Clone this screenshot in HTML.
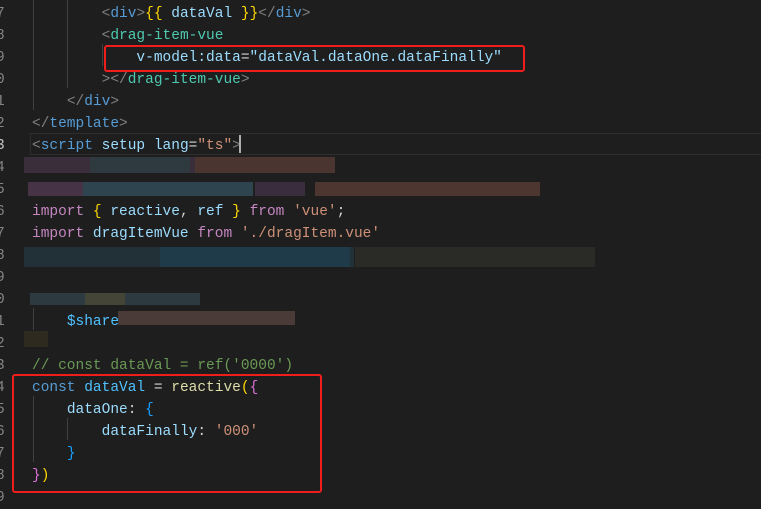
<!DOCTYPE html>
<html><head><meta charset="utf-8"><style>
html,body{margin:0;padding:0;width:761px;height:502px;overflow:hidden;background:#1e1e1e;}
.l{position:absolute;left:32px;height:22px;line-height:22px;font-family:"Liberation Mono",monospace;font-size:14.5px;white-space:pre;color:#d4d4d4;margin-top:2px}
.n{position:absolute;left:-4px;height:22px;line-height:22px;font-family:"Liberation Mono",monospace;font-size:14.5px;color:#858585;margin-top:2px}
.g{color:#808080}.t{color:#569cd6}.c{color:#4ec9b0}.a{color:#9cdcfe}.s{color:#ce9178}.k{color:#c586c0}
.f{color:#dcdcaa}.cm{color:#6a9955}.y{color:#ffd700}.p{color:#da70d6}.b{color:#179fff}.v{color:#4fc1ff}
.guide{position:absolute;width:1px;background:#404040}
.blk{position:absolute}
.red{position:absolute;border:2px solid #f01d1d;border-radius:3px}
</style></head><body>
<div style="position:absolute;left:30px;top:133px;width:731px;height:20px;border:1px solid #2e2e2e"></div>
<div class="guide" style="left:33px;top:0;height:110px"></div>
<div class="guide" style="left:67px;top:0;height:88px"></div>
<div class="guide" style="left:102px;top:44px;height:22px"></div>
<div class="guide" style="left:33px;top:308px;height:22px"></div>
<div class="guide" style="left:33px;top:396px;height:66px"></div>
<div class="guide" style="left:67px;top:418px;height:22px"></div>

<div class="n" style="top:1px">7</div><div class="n" style="top:23px">8</div><div class="n" style="top:45px">9</div><div class="n" style="top:67px">0</div><div class="n" style="top:89px">1</div><div class="n" style="top:111px">2</div><div class="n" style="top:133px;color:#c6c6c6">3</div><div class="n" style="top:155px">4</div><div class="n" style="top:177px">5</div><div class="n" style="top:199px">6</div><div class="n" style="top:221px">7</div><div class="n" style="top:243px">8</div><div class="n" style="top:265px">9</div><div class="n" style="top:287px">0</div><div class="n" style="top:309px">1</div><div class="n" style="top:331px">2</div><div class="n" style="top:353px">3</div><div class="n" style="top:375px">4</div><div class="n" style="top:397px">5</div><div class="n" style="top:419px">6</div><div class="n" style="top:441px">7</div><div class="n" style="top:463px">8</div><div class="n" style="top:485px">9</div>

<div class="l" style="top:1px">        <span class="g">&lt;</span><span class="t">div</span><span class="g">&gt;</span><span class="y">{{</span> <span class="a">dataVal</span> <span class="y">}}</span><span class="g">&lt;/</span><span class="t">div</span><span class="g">&gt;</span></div>
<div class="l" style="top:23px">        <span class="g">&lt;</span><span class="c">drag-item-vue</span></div>
<div class="l" style="top:45px">            <span class="a">v-model:data</span>=<span class="a">"dataVal.dataOne.dataFinally"</span></div>
<div class="l" style="top:67px">        <span class="g">&gt;&lt;/</span><span class="c">drag-item-vue</span><span class="g">&gt;</span></div>
<div class="l" style="top:89px">    <span class="g">&lt;/</span><span class="t">div</span><span class="g">&gt;</span></div>
<div class="l" style="top:111px"><span class="g">&lt;/</span><span class="t">template</span><span class="g">&gt;</span></div>
<div class="l" style="top:133px"><span class="g">&lt;</span><span class="t">script</span> <span class="a">setup</span> <span class="a">lang</span>=<span class="s">"ts"</span><span class="g">&gt;</span></div>
<div style="position:absolute;left:239px;top:135px;width:2px;height:18px;background:#aeafad"></div>

<div class="blk" style="left:24px;top:157px;width:190px;height:16px;background:#3a2e3a"></div>
<div class="blk" style="left:90px;top:157px;width:100px;height:16px;background:#2f3a40"></div>
<div class="blk" style="left:195px;top:157px;width:140px;height:16px;background:#4a3530"></div>
<div class="blk" style="left:28px;top:182px;width:225px;height:14px;background:#2e4550"></div>
<div class="blk" style="left:28px;top:182px;width:55px;height:14px;background:#463446"></div>
<div class="blk" style="left:255px;top:182px;width:50px;height:14px;background:#3a2e3e"></div>
<div class="blk" style="left:315px;top:182px;width:225px;height:14px;background:#4d3530"></div>

<div class="l" style="top:199px"><span class="k">import</span> <span class="y">{</span> <span class="a">reactive</span>, <span class="a">ref</span> <span class="y">}</span> <span class="k">from</span> <span class="s">'vue'</span>;</div>
<div class="l" style="top:221px"><span class="k">import</span> <span class="a">dragItemVue</span> <span class="k">from</span> <span class="s">'./dragItem.vue'</span></div>

<div class="blk" style="left:24px;top:247px;width:330px;height:20px;background:#223038"></div>
<div class="blk" style="left:160px;top:247px;width:190px;height:20px;background:#1f3a48"></div>
<div class="blk" style="left:355px;top:247px;width:240px;height:20px;background:#2a2b26"></div>
<div class="blk" style="left:30px;top:293px;width:170px;height:12px;background:#2d3a40"></div>
<div class="blk" style="left:85px;top:293px;width:40px;height:12px;background:#444536"></div>
<div class="l" style="top:309px">    <span class="v">$share.</span></div>
<div class="blk" style="left:118px;top:311px;width:177px;height:14px;background:#4a3a38"></div>
<div class="blk" style="left:24px;top:331px;width:24px;height:16px;background:#2e2a20"></div>

<div class="l" style="top:353px"><span class="cm">// const dataVal = ref('0000')</span></div>
<div class="l" style="top:375px"><span class="t">const</span> <span class="v">dataVal</span> = <span class="f">reactive</span><span class="y">(</span><span class="p">{</span></div>
<div class="l" style="top:397px">    <span class="a">dataOne</span>: <span class="b">{</span></div>
<div class="l" style="top:419px">        <span class="a">dataFinally</span>: <span class="s">'000'</span></div>
<div class="l" style="top:441px">    <span class="b">}</span></div>
<div class="l" style="top:463px"><span class="p">}</span><span class="y">)</span></div>

<div class="red" style="left:104px;top:45px;width:417px;height:23px"></div>
<div class="red" style="left:12px;top:374px;width:306px;height:115px"></div>
</body></html>
